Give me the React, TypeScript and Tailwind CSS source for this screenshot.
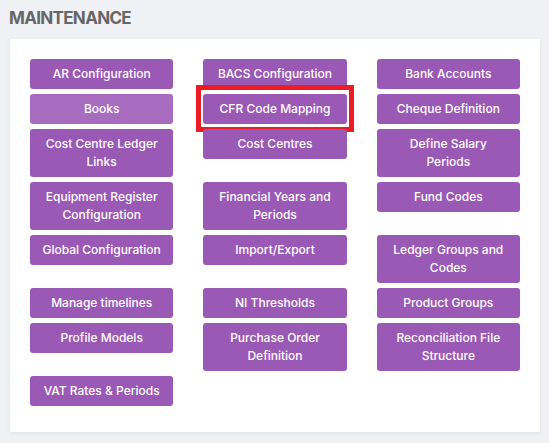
const items: string[] = [
  "AR Configuration",
  "BACS Configuration",
  "Bank Accounts",
  "Books",
  "CFR Code Mapping",
  "Cheque Definition",
  "Cost Centre Ledger Links",
  "Cost Centres",
  "Define Salary Periods",
  "Equipment Register Configuration",
  "Financial Years and Periods",
  "Fund Codes",
  "Global Configuration",
  "Import/Export",
  "Ledger Groups and Codes",
  "Manage timelines",
  "NI Thresholds",
  "Product Groups",
  "Profile Models",
  "Purchase Order Definition",
  "Reconciliation File Structure",
  "VAT Rates & Periods",
];

function MenuButton({ label }: { label: string }) {
  const hovered = label === "Books";
  const marked = label === "CFR Code Mapping";
  return (
    <div className="relative">
      <button
        className={`w-full rounded-[3px] px-3 py-[6px] text-center text-[12px] font-medium leading-[18px] text-white ${
          hovered ? "bg-[#a76cc0]" : "bg-[#9b59b6]"
        }`}
      >
        {label}
      </button>
      {marked && (
        <span className="pointer-events-none absolute -top-[9px] -right-[7px] -bottom-[8px] -left-[7px] border-[5px] border-[#ed1c24]" />
      )}
    </div>
  );
}

export default function App() {
  return (
    <main className="min-h-[443px] w-[549px] bg-[#f0f1f4] font-['Inter','Liberation_Sans',sans-serif]">
      <h2 className="px-[9px] pt-[6px] text-[17px] font-bold leading-[24px] tracking-[-0.04em] text-[#666666]">
        MAINTENANCE
      </h2>
      <section className="mt-[9px] ml-[10px] w-[530px] bg-white px-[20px] pt-[20px] pb-[26px] shadow-[0_1px_4px_rgba(0,0,0,0.08)]">
        <div className="grid grid-cols-3 items-start gap-x-[30px] gap-y-[5px]">
          {items.map((label) => (
            <MenuButton key={label} label={label} />
          ))}
        </div>
      </section>
    </main>
  );
}
